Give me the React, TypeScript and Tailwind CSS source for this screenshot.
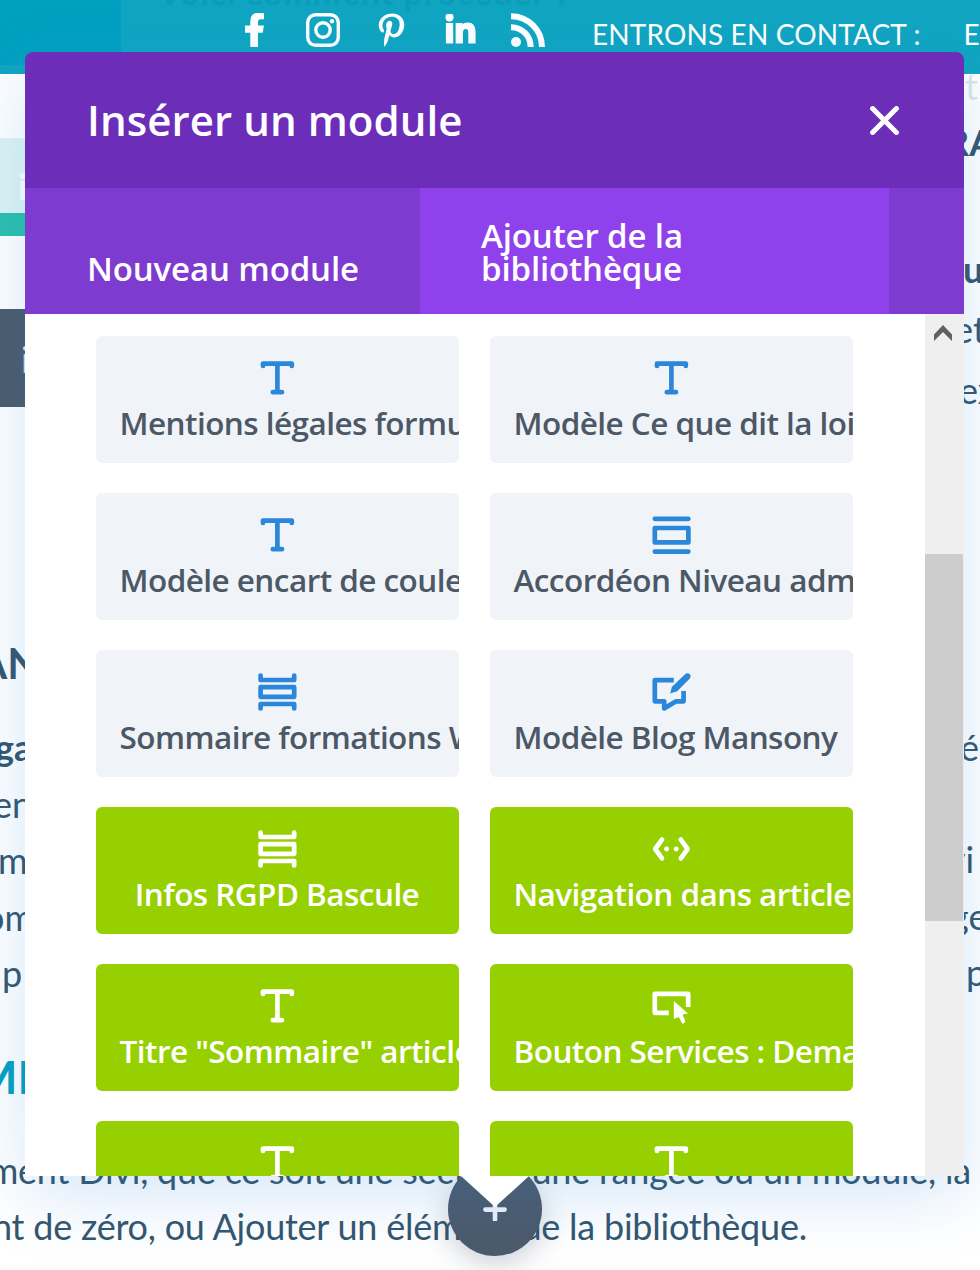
import type { ReactNode } from "react";
import { FaFacebookF, FaLinkedinIn, FaPinterestP } from "react-icons/fa";

type IconName = "text" | "accordion" | "toggle" | "blog" | "code" | "button";

type Module = {
  label: string;
  icon: IconName;
  global?: boolean;
};

const modules: Module[] = [
  { label: "Mentions légales formulaire", icon: "text" },
  { label: "Modèle Ce que dit la loi", icon: "text" },
  { label: "Modèle encart de couleur", icon: "text" },
  { label: "Accordéon Niveau admin", icon: "accordion" },
  { label: "Sommaire formations WP", icon: "toggle" },
  { label: "Modèle Blog Mansony", icon: "blog" },
  { label: "Infos RGPD Bascule", icon: "toggle", global: true },
  { label: "Navigation dans article", icon: "code", global: true },
  { label: 'Titre "Sommaire" article', icon: "text", global: true },
  { label: "Bouton Services : Demande", icon: "button", global: true },
  { label: "", icon: "text", global: true },
  { label: "", icon: "text", global: true },
];

const icons: Record<IconName, ReactNode> = {
  text: (
    <path d="M5 7V4.6H33.8V7M19.4 4.6V33.2M14.8 33.2H24" />
  ),
  accordion: (
    <>
      <path d="M2.8 2.8H36.4M2.8 35.6H36.4" />
      <rect x="2.8" y="12" width="33.6" height="14.4" />
    </>
  ),
  toggle: (
    <>
      <path d="M2.6 2.6V7H36.2V2.6M2.6 35.4V31H36.2V35.4" />
      <rect x="2.6" y="14.2" width="33.6" height="9.6" />
    </>
  ),
  blog: (
    <>
      <path d="M21.8 7.2H2.8V28.3H12.2V35.4L24.2 28.3H31.6V18" strokeLinecap="butt" />
      <path
        d="M32.8 1.4Q35.2 -.9 37.6 1Q39.6 3.2 37.6 5.8L25.2 18.2L18.2 20.4L19.8 14Z"
        fill="currentColor"
        stroke="none"
      />
    </>
  ),
  code: (
    <>
      <path d="M10 9.6L3.2 19L10 28.4M28.8 9.6L35.6 19L28.8 28.4" />
      <circle cx="14.6" cy="19" r="2.5" fill="currentColor" stroke="none" />
      <circle cx="24.2" cy="19" r="2.5" fill="currentColor" stroke="none" />
    </>
  ),
  button: (
    <>
      <path d="M16.8 25.8H2.8V6.8H36.2V20" strokeLinecap="butt" />
      <path
        d="M21.8 14L36 26.4L30.6 27.4L33.2 34Q33.2 37 30.2 36.4L26.8 30L21.8 32Z"
        fill="currentColor"
        stroke="none"
      />
    </>
  ),
};

function ModuleIcon({ name }: { name: IconName }) {
  return (
    <svg
      viewBox="0 0 38.4 38"
      className="h-[38px] w-[38.4px] overflow-visible"
      fill="none"
      stroke="currentColor"
      strokeWidth="4.7"
      strokeLinecap="round"
      strokeLinejoin="round"
    >
      {icons[name]}
    </svg>
  );
}

function ModuleCard({ module }: { module: Module }) {
  return (
    <li
      className={
        module.global
          ? "flex h-[126.5px] flex-col items-center overflow-hidden rounded-md bg-[#97d000] px-6 pt-[23px] text-white"
          : "flex h-[126.5px] flex-col items-center overflow-hidden rounded-md bg-[#f0f4f9] px-6 pt-[23px] text-[#4c5866]"
      }
    >
      <span className={module.global ? "text-white" : "text-[#2b87da]"}>
        <ModuleIcon name={module.icon} />
      </span>
      <span className="mt-[6px] -ml-px w-full text-center text-[31.5px] leading-10 font-semibold tracking-[-0.55px] whitespace-nowrap">
        {module.label}
      </span>
    </li>
  );
}

function TopBar() {
  return (
    <header className="flex h-[74px] bg-[#10a5c1] text-white">
      <div className="h-[65px] w-[121px] shrink-0 bg-[#00a0c0]" />
      <div className="flex w-[859px] flex-col overflow-hidden">
        {/* hero title scrolling away under the bar */}
        <p className="-mt-[30px] ml-[37px] h-[43px] text-[34px] leading-[43px] font-bold tracking-[0.9px] whitespace-nowrap text-[#0a9cb8]">
          Voici comment procéder ?
        </p>
        <div className="flex h-[34px] items-center whitespace-nowrap">
          <FaFacebookF className="ml-[123px] h-[34px] w-[21px] shrink-0" stroke="currentColor" strokeWidth="16" />
          <svg viewBox="0 0 34 34" className="ml-[41px] size-[34px] shrink-0" fill="none" stroke="currentColor" strokeWidth="3.4">
            <rect x="1.7" y="1.7" width="30.6" height="30.6" rx="8" />
            <circle cx="17" cy="17" r="7.2" />
            <circle cx="26" cy="8.2" r="2.2" fill="currentColor" stroke="none" />
          </svg>
          <FaPinterestP className="ml-[38px] h-[34px] w-[27px] shrink-0" />
          <FaLinkedinIn className="ml-[39px] size-[33px] shrink-0" stroke="currentColor" strokeWidth="20" />
          <svg viewBox="0 0 34 34" className="ml-[34px] size-[34px] shrink-0" fill="none" stroke="currentColor" strokeWidth="6">
            <circle cx="5" cy="29" r="5" fill="currentColor" stroke="none" />
            <path d="M0 14.2A19.5 19.5 0 0 1 19.6 34M0 3.2A31 31 0 0 1 31 34" />
          </svg>
          <span className="ml-[47px] pt-[8px] text-[28px] tracking-[0.13px]">ENTRONS EN CONTACT :</span>
          <span className="ml-[43px] pt-[8px] text-[28px]">E</span>
        </div>
      </div>
    </header>
  );
}

function PageLeft() {
  return (
    <div className="w-[60px] overflow-hidden whitespace-nowrap text-[36px] leading-[56.4px]">
      <div className="mt-16 h-[74.5px] bg-[#dff4f4] pt-5 pl-[18px] font-bold text-white">i</div>
      <div className="h-[23.5px] bg-[#2bbfab]" />
      <div className="mt-[73px] h-[98px] bg-[#4c5a6a] pt-[22px] pl-[21px] text-[#dce5ee]">i</div>
      <p className="mt-[228px] -ml-[22px] text-[42px] font-bold">AN</p>
      <p className="mt-[28px] -ml-[5px] font-bold">ga</p>
      <p className="-ml-[7px]">en</p>
      <p className="-ml-[2px]">m</p>
      <p className="-ml-[16px]">om</p>
      <p className="ml-[2px]">p</p>
      <p className="mt-[48px] -ml-[26px] text-[46px] font-bold text-[#00a0c0]">MI</p>
    </div>
  );
}

function PageRight() {
  return (
    <div className="w-10 overflow-hidden whitespace-nowrap text-[36px] leading-[56.4px]">
      <p className="-mt-4 ml-[25px] text-[#dde6ee]">t</p>
      <p className="ml-[6px] font-bold">RA</p>
      <p className="mt-[70px] ml-[23px] font-bold">u</p>
      <p className="mt-[4px] ml-[14px]">et</p>
      <p className="mt-[4px] ml-[19px]">ex</p>
      <p className="mt-[301px] ml-[20px]">ér</p>
      <p className="mt-[56px] ml-[7px]">vi</p>
      <p className="ml-[10px]">ge</p>
      <p className="ml-[26px]">p</p>
    </div>
  );
}

export default function App() {
  return (
    <main className="relative h-[1270px] w-[980px] overflow-hidden bg-white font-['Lato',sans-serif] text-[#34566e]">
      <TopBar />
      <div className="flex h-[1068px] justify-between">
        <PageLeft />
        <PageRight />
      </div>
      <div className="flex h-[56px] items-center justify-end pr-[9px] text-[36px] tracking-[-0.22px] whitespace-nowrap">
        ment Divi, que ce soit une section, une rangée ou un module, la
      </div>
      <div className="-ml-[8px] flex h-[56px] items-center text-[36px] tracking-[-0.23px] whitespace-nowrap">
        nt de zéro, ou Ajouter un élément de la bibliothèque.
      </div>

      <div className="absolute top-[1162px] left-[448px] flex size-[94px] items-center justify-center rounded-full bg-[#4c5a6b] shadow-[0_8px_28px_rgba(60,70,90,0.25)]">
        <svg viewBox="0 0 24 24" className="size-6 text-[#eef2f8]" stroke="currentColor" strokeWidth="4.6" strokeLinecap="round">
          <path d="M2.4 12.6H21.6M12 3V22.4" />
        </svg>
      </div>

      <section className="absolute top-[52px] left-[25px] w-[939px] rounded-t-lg font-['Open_Sans',sans-serif] shadow-[0_20px_70px_rgba(43,135,218,0.2)]">
        <header className="flex h-[136px] items-center justify-between rounded-t-lg bg-[#6c2eb9] pr-[65px] pb-px pl-[62px] text-white">
          <h1 className="text-[42px] font-semibold tracking-[0.08px]">Insérer un module</h1>
          <svg viewBox="0 0 29 29" className="mt-px size-[29px]" stroke="currentColor" strokeWidth="5" strokeLinecap="round">
            <path d="M2.6 2.6L26.4 26.4M26.4 2.6L2.6 26.4" />
          </svg>
        </header>
        <nav className="flex h-[126px] bg-[#7e3bd0] text-[33px] leading-[33px] font-semibold tracking-[-0.12px] text-white">
          <button className="flex w-[395px] items-end pb-[29.5px] pl-[62px] text-left">Nouveau module</button>
          <button className="flex w-[469px] items-end bg-[#8f42ec] pr-[120px] pb-[29.5px] pl-[61px] text-left">
            Ajouter de la bibliothèque
          </button>
        </nav>
        <div className="flex h-[862px] bg-white">
          <ul className="grid w-[899.5px] grid-cols-[363px_363px] content-start gap-x-[31px] gap-y-[30.5px] overflow-hidden pt-[22px] pl-[71px]">
            {modules.map((module, i) => (
              <ModuleCard key={i} module={module} />
            ))}
          </ul>
          <div className="w-[39.5px] bg-[#efefef]">
            <svg viewBox="0 0 18 16" className="mt-[11px] ml-[9.5px] h-4 w-[18px] text-[#606060]" fill="currentColor">
              <path d="M0 9.5L9 0L18 9.5V16L9 7L0 16Z" />
            </svg>
            <div className="mt-[213px] h-[367px] w-[38.5px] bg-[#cdcdcd]" />
          </div>
        </div>
        <svg viewBox="0 0 68 34" className="absolute top-full left-[436px] h-[31px] w-[68px] text-white" fill="currentColor" preserveAspectRatio="none">
          <path d="M0 0H68L34 34Z" />
        </svg>
      </section>
    </main>
  );
}
